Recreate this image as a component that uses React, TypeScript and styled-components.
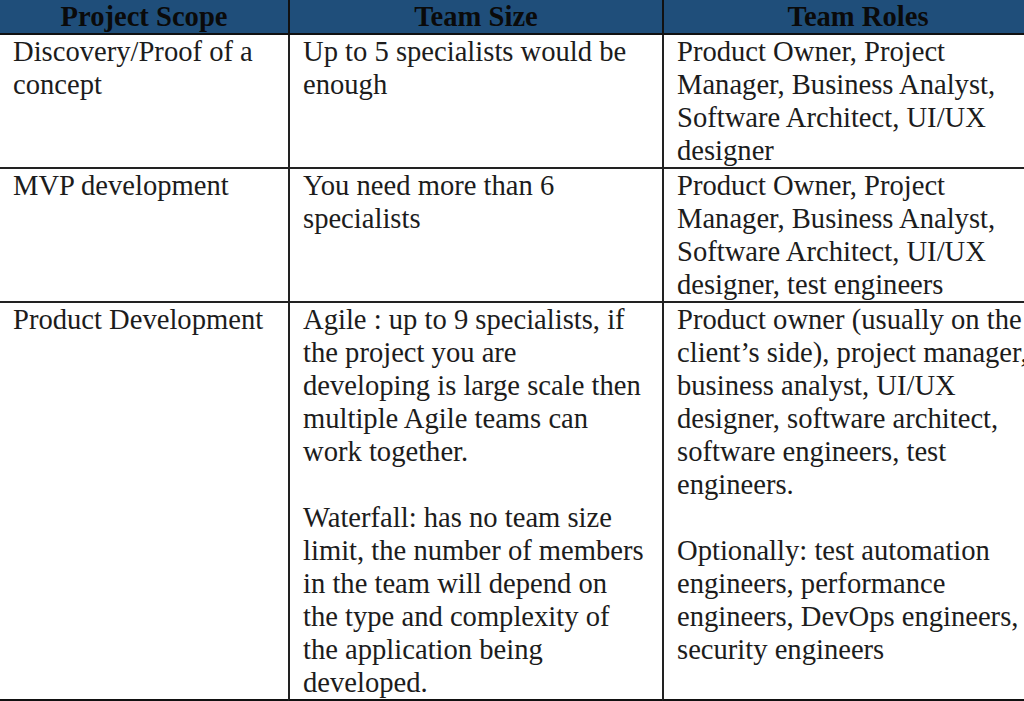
import React from "react";
import styled, { createGlobalStyle } from "styled-components";

const GlobalStyle = createGlobalStyle`
  html, body {
    margin: 0;
    padding: 0;
    overflow: hidden;
    background: #ffffff;
  }
`;

type Row = {
  scope: string;
  size: string[];
  roles: string[];
};

const rows: Row[] = [
  {
    scope: "Discovery/Proof of a concept",
    size: ["Up to 5 specialists would be enough"],
    roles: ["Product Owner, Project Manager, Business Analyst, Software Architect, UI/UX designer"],
  },
  {
    scope: "MVP development",
    size: ["You need more than 6 specialists"],
    roles: [
      "Product Owner, Project Manager, Business Analyst, Software Architect, UI/UX designer, test engineers",
    ],
  },
  {
    scope: "Product Development",
    size: [
      "Agile : up to 9 specialists, if the project you are developing is large scale then multiple Agile teams can work together.",
      "Waterfall: has no team size limit, the number of members in the team will depend on the type and complexity of the application being developed.",
    ],
    roles: [
      "Product owner (usually on the client\u2019s side), project manager, business analyst, UI/UX designer, software architect, software engineers, test engineers.",
      "Optionally: test automation engineers, performance engineers, DevOps engineers, security engineers",
    ],
  },
];

const App = () => {
  return (
    <>
      <GlobalStyle />
      <Table>
        <HeadCell>Project Scope</HeadCell>
        <HeadCell divided>Team Size</HeadCell>
        <HeadCell divided>Team Roles</HeadCell>
        {rows.map((row, i) => (
          <React.Fragment key={row.scope}>
            <Cell last={i === rows.length - 1}>
              <Para>{row.scope}</Para>
            </Cell>
            <Cell divided last={i === rows.length - 1}>
              {row.size.map((p) => (
                <Para key={p}>{p}</Para>
              ))}
            </Cell>
            <Cell divided last={i === rows.length - 1}>
              {row.roles.map((p) => (
                <Para key={p}>{p}</Para>
              ))}
            </Cell>
          </React.Fragment>
        ))}
      </Table>
    </>
  );
};

export default App;

const Table = styled.div`
  display: grid;
  grid-template-columns: 288px 374px 390px;
  width: 1052px;
  font-family: "Liberation Serif", "Times New Roman", serif;
  font-size: 28.6px;
  line-height: 33px;
  color: #1c1c1c;
`;

const HeadCell = styled.div<{ divided?: boolean }>`
  height: 33px;
  background: #1f4e7a;
  color: #0a0a0a;
  font-weight: bold;
  text-align: center;
  border-bottom: 2px solid #111;
  border-left: ${(p) => (p.divided ? "2px solid #111" : "none")};
  overflow: hidden;
`;

const Cell = styled.div<{ divided?: boolean; last?: boolean }>`
  padding: 0 16px 0 13px;
  border-left: ${(p) => (p.divided ? "2px solid #222" : "none")};
  border-bottom: 2px solid ${(p) => (p.last ? "#111" : "#222")};
  &:first-child {
    padding-right: 10px;
  }
`;

const Para = styled.p`
  margin: 0;
  & + & {
    margin-top: 33px;
  }
`;
